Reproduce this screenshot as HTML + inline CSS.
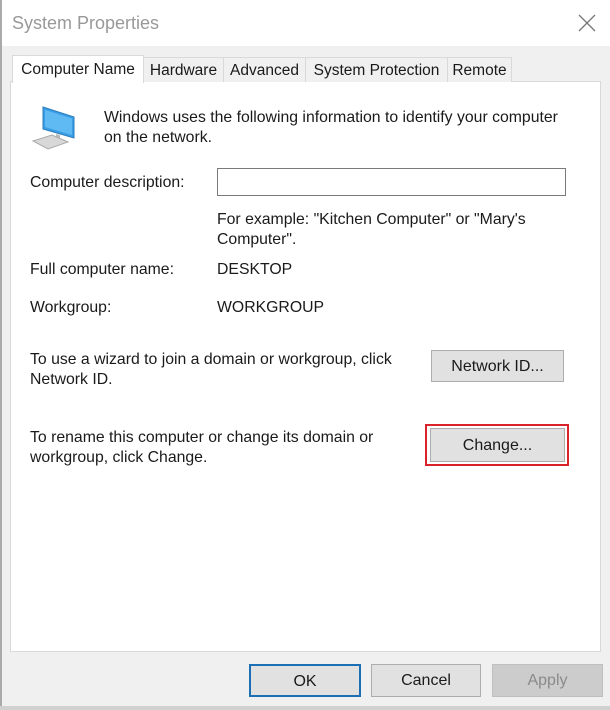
<!DOCTYPE html>
<html><head><style>
body{margin:0;width:610px;height:710px;background:#f0f0f0;font-family:"Liberation Sans",sans-serif;font-size:15.8px;color:#1a1a1a;position:relative;overflow:hidden}
.a{position:absolute;white-space:nowrap}
.btn{position:absolute;background:#e1e1e1;border:1px solid #adadad;box-sizing:border-box;text-align:center;font-size:16px}
.tab{position:absolute;top:57px;height:25px;border:1px solid #d9d9d9;border-bottom:none;box-sizing:border-box;background:#f0f0f0;font-size:15.5px;text-align:center;line-height:26px}
</style></head><body>
<div class="a" style="left:0;top:0;width:610px;height:46px;background:#fff"></div>
<div class="a" style="left:0;top:0;width:2px;height:710px;background:#aaa"></div>
<div class="a" style="left:0;top:706px;width:610px;height:4px;background:#d0d0d0"></div>
<div class="a" style="left:12px;top:13px;font-size:18px;color:#999">System Properties</div>
<svg class="a" style="left:578px;top:14px" width="18" height="18"><path d="M1 1L17 17M17 1L1 17" stroke="#777" stroke-width="1.3"/></svg>
<div class="a" style="left:10px;top:81px;width:591px;height:571px;background:#fff;border:1px solid #d9d9d9;box-sizing:border-box"></div>
<div class="tab" style="left:143px;width:81px">Hardware</div>
<div class="tab" style="left:223px;width:83px">Advanced</div>
<div class="tab" style="left:305px;width:143px">System Protection</div>
<div class="tab" style="left:447px;width:65px">Remote</div>
<div class="tab" style="left:12px;top:55px;height:28px;width:132px;background:#fff;line-height:28px">Computer Name</div>
<svg class="a" style="left:30px;top:104px" width="50" height="46">
<path d="M13 3L44 13L44 34L13 25Z" fill="#3a9ee6" stroke="#2a7dbc"/>
<path d="M15 6L42 14.5L42 31L15 23Z" fill="#5fb9f2"/>
<path d="M26 30L30 31L30 36L26 35Z" fill="#bbb"/>
<path d="M3 37L22 31L38 38L18 45Z" fill="#d8d8d8" stroke="#aaa"/>
</svg>
<div class="a" style="left:104px;top:109px">Windows uses the following information to identify your computer</div>
<div class="a" style="left:104px;top:129px">on the network.</div>
<div class="a" style="left:30px;top:174px">Computer description:</div>
<div class="a" style="left:217px;top:168px;width:349px;height:28px;border:1px solid #7a7a7a;box-sizing:border-box;background:#fff"></div>
<div class="a" style="left:217px;top:211px">For example: "Kitchen Computer" or "Mary's</div>
<div class="a" style="left:217px;top:231px">Computer".</div>
<div class="a" style="left:30px;top:261px">Full computer name:</div>
<div class="a" style="left:217px;top:261px">DESKTOP</div>
<div class="a" style="left:30px;top:299px">Workgroup:</div>
<div class="a" style="left:217px;top:299px">WORKGROUP</div>
<div class="a" style="left:30px;top:351px">To use a wizard to join a domain or workgroup, click</div>
<div class="a" style="left:30px;top:371px">Network ID.</div>
<div class="btn" style="left:431px;top:350px;width:133px;height:32px;line-height:31px">Network ID...</div>
<div class="a" style="left:30px;top:429px">To rename this computer or change its domain or</div>
<div class="a" style="left:30px;top:449px">workgroup, click Change.</div>
<div class="a" style="left:425px;top:424px;width:144px;height:42px;border:2px solid #d9222a;box-sizing:border-box"></div>
<div class="btn" style="left:430px;top:428px;width:135px;height:34px;line-height:33px">Change...</div>
<div class="btn" style="left:249px;top:664px;width:112px;height:33px;line-height:31px;border:2px solid #1a6fb5">OK</div>
<div class="btn" style="left:371px;top:664px;width:110px;height:33px;line-height:32px">Cancel</div>
<div class="btn" style="left:492px;top:664px;width:111px;height:33px;line-height:32px;background:#ccc;border-color:#bfbfbf;color:#8a8a8a">Apply</div>
</body></html>
